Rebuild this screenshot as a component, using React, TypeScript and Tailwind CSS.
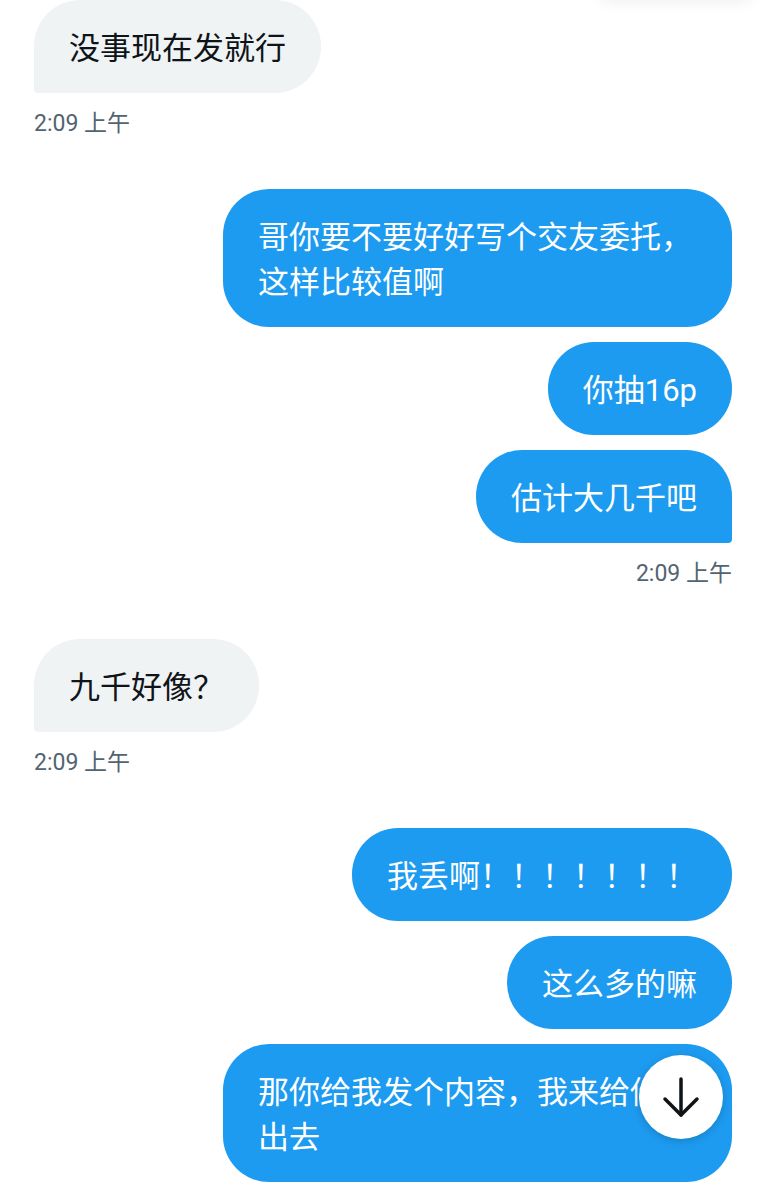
import React from 'react';

type Msg = { text: string; corner?: boolean };
type Group = { side: 'in' | 'out'; msgs: Msg[]; time: string };

const groups: Group[] = [
  { side: 'in', msgs: [{ text: '没事现在发就行', corner: true }], time: '2:09 上午' },
  {
    side: 'out',
    msgs: [
      { text: '哥你要不要好好写个交友委托，这样比较值啊' },
      { text: '你抽16p' },
      { text: '估计大几千吧', corner: true },
    ],
    time: '2:09 上午',
  },
  { side: 'in', msgs: [{ text: '九千好像？', corner: true }], time: '2:09 上午' },
];

const tail = ['我丢啊！！！！！！！', '这么多的嘛', '那你给我发个内容，我来给你发出去'];

const font = { fontFamily: 'Roboto, "Noto Sans CJK SC", sans-serif' };

const Bubble: React.FC<{ side: 'in' | 'out'; text: string; corner?: boolean }> = ({ side, text, corner }) => {
  const base = 'max-w-[509px] px-[35px] pt-[26px] pb-[22px] text-[31px] leading-[45px] rounded-[46px]';
  if (side === 'in') {
    return (
      <div className={`${base} bg-[#eff3f4] text-[#0f1419] ${corner ? 'rounded-bl-[4px]' : ''}`}>{text}</div>
    );
  }
  return <div className={`${base} bg-[#1d9bf0] text-white ${corner ? 'rounded-br-[4px]' : ''}`}>{text}</div>;
};

export default function App() {
  return (
    <div className="relative h-[1200px] overflow-hidden bg-white px-[34px]" style={font}>
      {/* faint header shadow peeking in at the top */}
      <div className="absolute -top-[30px] right-[10px] h-[30px] w-[160px] rounded-full bg-white shadow-[0_4px_14px_rgba(0,0,0,0.05)]" />

      {groups.map((g, i) => (
        <div key={i} className={`flex flex-col gap-[15px] ${g.side === 'out' ? 'items-end' : 'items-start'}`}>
          {g.msgs.map((m, j) => (
            <Bubble key={j} side={g.side} text={m.text} corner={m.corner} />
          ))}
          <div className="pt-[3px] mb-[52px] text-[23px] leading-[26px] text-[#536471]">{g.time}</div>
        </div>
      ))}

      <div className="flex flex-col items-end gap-[15px]">
        {tail.map((t, i) => (
          <Bubble key={i} side="out" text={t} />
        ))}
      </div>

      {/* scroll to bottom */}
      <button className="absolute left-[639px] top-[1055px] flex h-[84px] w-[84px] items-center justify-center rounded-full bg-white shadow-[0_2px_8px_rgba(0,0,0,0.18)]">
        <svg width="40" height="44" viewBox="0 0 40 44" fill="none" stroke="#0f1419" strokeWidth="3.5" strokeLinecap="round" strokeLinejoin="round">
          <path d="M20 4v36" />
          <path d="M4 24l16 16 16-16" />
        </svg>
      </button>
    </div>
  );
}
